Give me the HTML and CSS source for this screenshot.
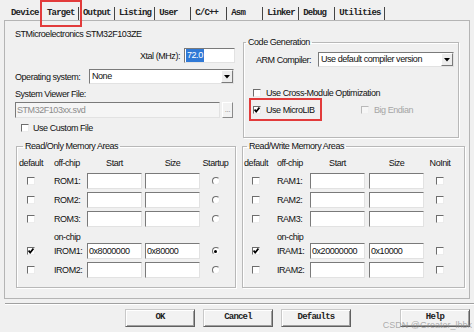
FILE: index.html
```html
<!DOCTYPE html>
<html lang="en">
<head>
    <meta charset="UTF-8">
    <title>Options for Target</title>
    <link rel="stylesheet" href="styles.css">
</head>
<body>
    <div class="dialog">
        <div class="tabs">
            <span class="tab tab-first">Device</span>
            <span class="tab tab-active">Target</span>
            <span class="tab">Output</span>
            <span class="tab">Listing</span>
            <span class="tab">User</span>
            <span class="tab">C/C++</span>
            <span class="tab">Asm</span>
            <span class="tab">Linker</span>
            <span class="tab">Debug</span>
            <span class="tab">Utilities</span>
        </div>

        <div class="panel">
            <div class="left">
                <div class="device">STMicroelectronics STM32F103ZE</div>
                <div class="xtal">
                    <label>Xtal (MHz):</label>
                    <span class="edit edit-xtal"><span class="hl">72.0</span></span>
                </div>
                <div class="os">
                    <label>Operating system:</label>
                    <span class="combo combo-os">
                        <span class="combo-text">None</span>
                        <span class="drop"><svg width="6" height="4" viewBox="0 0 6 4"><path d="M0 0H6L3 3.5Z" fill="#000"/></svg></span>
                    </span>
                </div>
                <div class="caption">System Viewer File:</div>
                <div class="svd">
                    <span class="edit edit-svd">STM32F103xx.svd</span>
                    <span class="dots">...</span>
                </div>
                <div class="check custom"><span class="cb"></span>Use Custom File</div>
            </div>

            <fieldset class="group codegen">
                <legend>Code Generation</legend>
                <div class="body">
                    <div class="arm">
                        <label>ARM Compiler:</label>
                        <span class="combo combo-arm">
                            <span class="combo-text">Use default compiler version</span>
                            <span class="drop"><svg width="6" height="4" viewBox="0 0 6 4"><path d="M0 0H6L3 3.5Z" fill="#000"/></svg></span>
                        </span>
                    </div>
                    <div class="check cross"><span class="cb"></span>Use Cross-Module Optimization</div>
                    <div class="lib-row">
                        <div class="check redbox"><span class="cb cb-on"><svg width="6" height="6" viewBox="0 0 6 6"><path d="M0.6 2.6L2.2 4.6L5.4 0.6" stroke="#000" stroke-width="1.6" fill="none"/></svg></span>Use MicroLIB</div>
                        <div class="check big"><span class="cb cb-off"></span>Big Endian</div>
                    </div>
                </div>
            </fieldset>

            <fieldset class="group mem mem-ro">
                <legend>Read/Only Memory Areas</legend>
                <div class="grid">
                    <span class="hd">default</span><span class="hd lab">off-chip</span><span class="hd">Start</span><span class="hd size">Size</span><span class="hd">Startup</span>

                    <span class="c"><span class="cb"></span></span><span class="lab">ROM1:</span><span class="edit"></span><span class="edit size"></span><span class="c"><span class="rb"></span></span>
                    <span class="c"><span class="cb"></span></span><span class="lab">ROM2:</span><span class="edit"></span><span class="edit size"></span><span class="c"><span class="rb"></span></span>
                    <span class="c"><span class="cb"></span></span><span class="lab">ROM3:</span><span class="edit"></span><span class="edit size"></span><span class="c"><span class="rb"></span></span>

                    <span class="lab chip">on-chip</span>

                    <span class="c"><span class="cb cb-on"><svg width="6" height="6" viewBox="0 0 6 6"><path d="M0.6 2.6L2.2 4.6L5.4 0.6" stroke="#000" stroke-width="1.6" fill="none"/></svg></span></span><span class="lab">IROM1:</span><span class="edit">0x8000000</span><span class="edit size">0x80000</span><span class="c"><span class="rb rb-on"></span></span>
                    <span class="c"><span class="cb"></span></span><span class="lab">IROM2:</span><span class="edit"></span><span class="edit size"></span><span class="c"><span class="rb"></span></span>
                </div>
            </fieldset>

            <fieldset class="group mem mem-rw">
                <legend>Read/Write Memory Areas</legend>
                <div class="grid">
                    <span class="hd">default</span><span class="hd lab">off-chip</span><span class="hd">Start</span><span class="hd size">Size</span><span class="hd">NoInit</span>

                    <span class="c"><span class="cb"></span></span><span class="lab">RAM1:</span><span class="edit"></span><span class="edit size"></span><span class="c"><span class="cb"></span></span>
                    <span class="c"><span class="cb"></span></span><span class="lab">RAM2:</span><span class="edit"></span><span class="edit size"></span><span class="c"><span class="cb"></span></span>
                    <span class="c"><span class="cb"></span></span><span class="lab">RAM3:</span><span class="edit"></span><span class="edit size"></span><span class="c"><span class="cb"></span></span>

                    <span class="lab chip">on-chip</span>

                    <span class="c"><span class="cb cb-on"><svg width="6" height="6" viewBox="0 0 6 6"><path d="M0.6 2.6L2.2 4.6L5.4 0.6" stroke="#000" stroke-width="1.6" fill="none"/></svg></span></span><span class="lab">IRAM1:</span><span class="edit">0x20000000</span><span class="edit size">0x10000</span><span class="c"><span class="cb"></span></span>
                    <span class="c"><span class="cb"></span></span><span class="lab">IRAM2:</span><span class="edit"></span><span class="edit size"></span><span class="c"><span class="cb"></span></span>
                </div>
            </fieldset>
        </div>

        <div class="sep"></div>
        <div class="buttons">
            <button class="btn">OK</button>
            <button class="btn">Cancel</button>
            <button class="btn">Defaults</button>
            <button class="btn btn-help">Help</button>
        </div>
        <div class="mark">CSDN @Greater_lhbk</div>
    </div>
</body>
</html>
```

FILE: styles.css
```css
* { box-sizing: border-box; }
body { margin: 0; background: #f0f0f0; color: #111; font-family: "Liberation Sans", Arial, sans-serif; font-size: 9px; letter-spacing: -0.45px; }
.dialog { position: relative; width: 474px; height: 332px; overflow: hidden; }
label { white-space: nowrap; }

/* tab strip */
.tabs { display: flex; height: 20px; padding-left: 7px; font-family: "Liberation Mono", monospace; font-weight: bold; font-size: 9px; letter-spacing: -0.8px; }
.tab { margin-top: 7px; height: 13px; line-height: 12px; min-width: 36px; padding: 0 3px 0 4px; border-right: 1px solid #444; color: #222; white-space: nowrap; }
.tab-first { border-right-color: transparent; }
.tab-active { position: relative; }
.tab-active::before { content: ""; position: absolute; left: -3px; top: -7px; width: 38px; height: 23px; border: 2px solid #e23b3b; }

/* main page */
.panel { display: grid; grid-template-columns: 221px 223px; grid-template-rows: 120px auto; column-gap: 6px; margin-left: 4px; width: 466px; height: 279px; padding: 0 3px 0 10px; border: 1px solid #b4b4b4; }
.left { display: flex; flex-direction: column; }
.device { margin-top: 8px; line-height: 11px; white-space: nowrap; }
.xtal { display: flex; justify-content: flex-end; align-items: center; gap: 4px; height: 15px; margin-top: 8px; padding-right: 1px; }
.os { display: flex; align-items: center; height: 15px; margin-top: 6px; }
.os label { width: 74px; }
.caption { margin-top: 5px; line-height: 11px; white-space: nowrap; }
.svd { display: flex; gap: 2px; height: 16px; margin-top: 2px; }

.edit { display: block; height: 16px; line-height: 14px; padding-left: 1px; background: #fff; border: 1px solid; border-color: #7a7a7a #e2e2e2 #e2e2e2 #7a7a7a; white-space: nowrap; overflow: hidden; }
.edit-xtal { width: 51px; height: 15px; line-height: 13px; }
.hl { display: inline-block; padding: 0 1px; background: #3079d6; color: #fff; }
.edit-svd { width: 205px; background: #f5f5f5; color: #8c8c8c; }
.dots { width: 11px; height: 16px; line-height: 13px; text-align: center; font-size: 8px; color: #8a8a8a; background: #f2f2f2; border: 1px solid; border-color: #fff #8a8a8a #8a8a8a #fff; }

.combo { display: flex; height: 15px; background: #fff; border: 1px solid; border-color: #7a7a7a #e2e2e2 #e2e2e2 #7a7a7a; }
.combo-os { width: 145px; }
.combo-arm { width: 136px; }
.combo-text { flex: 1; line-height: 13px; padding-left: 2px; white-space: nowrap; overflow: hidden; }
.drop { display: flex; align-items: center; justify-content: center; width: 12px; background: #ededed; border: 1px solid; border-color: #fff #7a7a7a #7a7a7a #fff; }

/* check boxes and radios */
.check { display: flex; align-items: center; gap: 5px; white-space: nowrap; }
.cb { display: inline-flex; align-items: center; justify-content: center; flex: none; width: 8px; height: 8px; background: #fff; border: 1px solid; border-color: #6d6d6d #ececec #ececec #6d6d6d; }
.cb-off { border-color: #b9b9b9 #efefef #efefef #b9b9b9; background: #f6f6f6; }
.rb { display: inline-flex; align-items: center; justify-content: center; width: 8px; height: 8px; border-radius: 50%; background: #fff; border: 1px solid; border-color: #6d6d6d #ececec #ececec #6d6d6d; }
.rb-on::after { content: ""; width: 3px; height: 3px; border-radius: 50%; background: #000; }
.custom { gap: 4px; height: 10px; margin-top: 5px; padding-left: 6px; }

/* group boxes */
.group { margin: 0; padding: 0; min-width: 0; border: 1px solid #b8b8b8; box-shadow: 1px 1px 0 #fff, inset 1px 1px 0 #fff; }
.group legend { padding: 0 2px; line-height: 11px; white-space: nowrap; }

.codegen { width: 216px; height: 101px; margin: 16px 0 0 1px; }
.codegen legend { margin-left: 2px; }
.codegen .body { padding-left: 9px; }
.arm { display: flex; align-items: center; height: 15px; margin-top: 4px; padding-left: 3px; }
.arm label { width: 62px; }
.cross { height: 10px; margin-top: 21px; }
.lib-row { display: flex; align-items: center; height: 23px; }
.redbox { width: 73px; height: 23px; margin-left: -4px; padding-left: 2px; border: 2px solid #e23b3b; }
.big { margin-left: 39px; color: #a6a6a6; }

.mem { height: 147px; }
.mem-ro { width: 220px; margin-left: 1px; }
.mem-ro legend { margin-left: 6px; }
.mem-rw { width: 223px; }
.mem-rw legend { margin-left: 4px; }
.grid { display: grid; grid-template-rows: 14px 16px 16px 16px 10px 16px 16px; row-gap: 3px; align-items: center; padding-top: 4px; }
.mem-ro .grid { grid-template-columns: 28px 42px 55px 58px 31px; }
.mem-rw .grid { grid-template-columns: 26px 41px 55px 59px 32px; }
.hd { text-align: center; line-height: 14px; white-space: nowrap; }
.hd.lab { text-align: left; }
.lab { padding-left: 9px; white-space: nowrap; }
.mem-rw .lab { padding-left: 8px; }
.size { width: 55px; margin-left: 3px; }
.mem-rw .size { margin-left: 4px; }
.c { display: flex; justify-content: center; }
.chip { grid-column: 2 / -1; margin-top: 3px; line-height: 10px; }

/* bottom buttons */
.sep { height: 2px; margin: 4px 0 0 5px; border-top: 1px solid #a0a0a0; border-bottom: 1px solid #fff; }
.buttons { display: flex; gap: 8px; margin-top: 4px; padding: 0 4px 0 125px; }
.btn { width: 70px; height: 18px; padding: 0 0 2px; background: #f2f2f2; color: #222; font-family: "Liberation Mono", monospace; font-weight: bold; font-size: 9px; letter-spacing: -0.8px; border: 1px solid; border-color: #c8c8c8 #606060 #606060 #c8c8c8; box-shadow: inset 1px 1px 0 #fff, inset -1px -1px 0 #a0a0a0; }
.btn-help { margin-left: auto; }
.mark { position: absolute; right: 2px; bottom: 2px; line-height: 10px; color: rgba(140, 140, 140, 0.7); font-size: 9px; letter-spacing: 0; }
```
